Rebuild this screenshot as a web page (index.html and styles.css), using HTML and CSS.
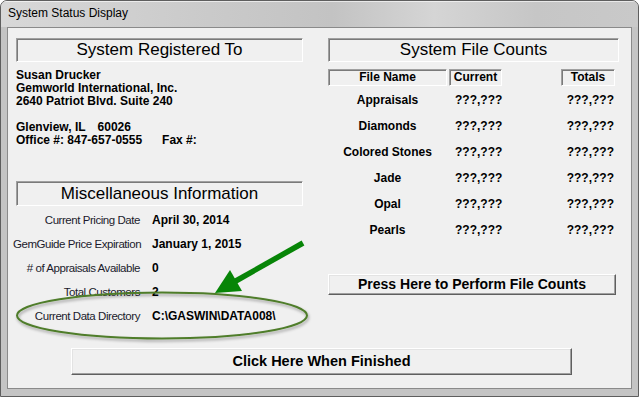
FILE: index.html
```html
<!DOCTYPE html>
<html lang="en">
<head>
  <meta charset="UTF-8" />
  <title>System Status Display</title>
  <link rel="stylesheet" href="styles.css">
</head>
<body>
<div class="window">
  <div class="titlebar">System Status Display</div>

  <div class="client">
    <div class="columns">
      <div class="col">
        <div class="caption">System Registered To</div>

        <div class="address">
          <div>Susan Drucker</div>
          <div>Gemworld International, Inc.</div>
          <div>2640 Patriot Blvd. Suite 240</div>
          <div class="blank"></div>
          <div>Glenview, IL<span class="zip">60026</span></div>
          <div>Office #: 847-657-0555<span class="fax">Fax #:</span></div>
        </div>

        <div class="caption misc-caption">Miscellaneous Information</div>

        <div class="misc">
          <span class="label">Current Pricing Date</span>
          <span class="value">April 30, 2014</span>
          <span class="label">GemGuide Price Expiration</span>
          <span class="value">January 1, 2015</span>
          <span class="label"># of Appraisals Available</span>
          <span class="value">0</span>
          <span class="label">Total Customers</span>
          <span class="value">2</span>
          <span class="label">Current Data Directory</span>
          <span class="value">C:\GASWIN\DATA008\</span>
        </div>
      </div>

      <div class="col">
        <div class="caption">System File Counts</div>

        <div class="counts" id="counts">
          <div class="hcell h-name">File Name</div>
          <div class="hcell h-current">Current</div>
          <div class="hcell h-totals">Totals</div>
        </div>

        <button class="btn count-btn" id="countBtn">Press Here to Perform File Counts</button>
      </div>
    </div>

    <button class="btn finish-btn">Click Here When Finished</button>
  </div>

  <svg class="annotation" width="639" height="397" viewBox="0 0 639 397">
    <defs>
      <filter id="soft" x="-10%" y="-40%" width="120%" height="180%">
        <feDropShadow dx="1" dy="2" stdDeviation="1.6" flood-color="#000" flood-opacity="0.35"/>
      </filter>
    </defs>
    <ellipse cx="162" cy="315.5" rx="145" ry="23" fill="none" stroke="#4f7d2b" stroke-width="2" filter="url(#soft)"/>
    <line x1="303" y1="243" x2="234" y2="282" stroke="#078507" stroke-width="5.5"/>
    <polygon points="215,293 230,270 242,291" fill="#078507"/>
  </svg>
</div>

<script>
  const files = ["Appraisals", "Diamonds", "Colored Stones", "Jade", "Opal", "Pearls"];
  const counts = document.getElementById("counts");

  files.forEach(name => {
    counts.insertAdjacentHTML("beforeend",
      `<div class="cell c-name">${name}</div>` +
      `<div class="cell c-current">???,???</div>` +
      `<div class="cell c-totals">???,???</div>`);
  });
</script>
</body>
</html>
```

FILE: styles.css
```css
* {
  box-sizing: border-box;
}

body {
  margin: 0;
  background: #fff;
  font-family: "Liberation Sans", Arial, sans-serif;
  color: #000;
}

.window {
  position: relative;
  width: 639px;
  height: 397px;
  border: 1px solid #5e5e5e;
  border-radius: 7px 7px 0 0;
  background: #c4c4c4;
  padding: 0 6px 7px;
  display: flex;
  flex-direction: column;
  overflow: hidden;
}

.titlebar {
  height: 26px;
  margin: 0 -6px;
  padding: 5px 0 0 7px;
  font-size: 12px;
  line-height: 15px;
  background: linear-gradient(90deg, #d8d8d8 0%, #cbcbcb 30%, #c3c3c3 52%, #d5d5d5 68%, #c6c6c6 84%, #c9c9c9 100%);
  box-shadow: inset 0 1px 0 rgba(255, 255, 255, 0.6);
}

.client {
  flex: 1;
  border: 1px solid #8a8a8a;
  background: #f0f0f0;
  padding: 10px 11px 0 8px;
}

.columns {
  display: grid;
  grid-template-columns: 287px 291px;
  column-gap: 25px;
  align-items: start;
}

.caption {
  height: 24px;
  border: 1px solid;
  border-color: #a0a0a0 #fff #fff #a0a0a0;
  box-shadow: inset 1px 1px 0 #7a7a7a;
  font-size: 17px;
  line-height: 22px;
  text-align: center;
}

.misc-caption {
  height: 25px;
  line-height: 23px;
  margin-top: 34px;
}

.address {
  margin-top: 7px;
  font-size: 12px;
  font-weight: bold;
  line-height: 13px;
  white-space: nowrap;
}

.blank {
  height: 13px;
}

.zip {
  margin-left: 12px;
}

.fax {
  margin-left: 20px;
}

.misc {
  display: grid;
  grid-template-columns: 127px 1fr;
  grid-auto-rows: 24px;
  column-gap: 12px;
  margin: 2px 0 0 -3px;
  line-height: 24px;
  white-space: nowrap;
}

.misc .label {
  font-size: 11.5px;
  letter-spacing: -0.45px;
  text-align: right;
  color: #1b1b2c;
}

.misc .value {
  font-size: 12px;
  font-weight: bold;
}

.counts {
  display: grid;
  grid-template-columns: 121px 112px 54px;
  grid-template-rows: 18px;
  grid-auto-rows: 26px;
  margin-top: 7px;
  font-size: 12px;
  font-weight: bold;
  white-space: nowrap;
}

.hcell {
  height: 17px;
  border: 1px solid;
  border-color: #a0a0a0 #fff #fff #a0a0a0;
  box-shadow: inset 1px 1px 0 #7a7a7a;
  line-height: 15px;
  text-align: center;
}

.h-name {
  width: 119px;
}

.h-current {
  width: 53px;
}

.h-totals {
  width: 54px;
}

.cell {
  line-height: 26px;
}

.c-name {
  width: 119px;
  text-align: center;
}

.c-current {
  padding-left: 6px;
}

.c-totals {
  text-align: right;
  padding-right: 1px;
}

.btn {
  display: block;
  padding: 0;
  background: #f0f0f0;
  color: #000;
  font-family: "Liberation Sans", Arial, sans-serif;
  font-weight: bold;
  border: 1px solid;
  border-color: #fff #5f5f5f #5f5f5f #fff;
  box-shadow: inset -1px -1px 0 #a0a0a0, inset 1px 1px 0 #e3e3e3;
  cursor: pointer;
}

.count-btn {
  width: 288px;
  height: 21px;
  margin-top: 31px;
  font-size: 14px;
  line-height: 17px;
}

.finish-btn {
  width: 501px;
  height: 27px;
  margin: 20px 0 0 55px;
  font-size: 14.5px;
  line-height: 23px;
}

.annotation {
  position: absolute;
  left: -1px;
  top: -1px;
  pointer-events: none;
}
```
